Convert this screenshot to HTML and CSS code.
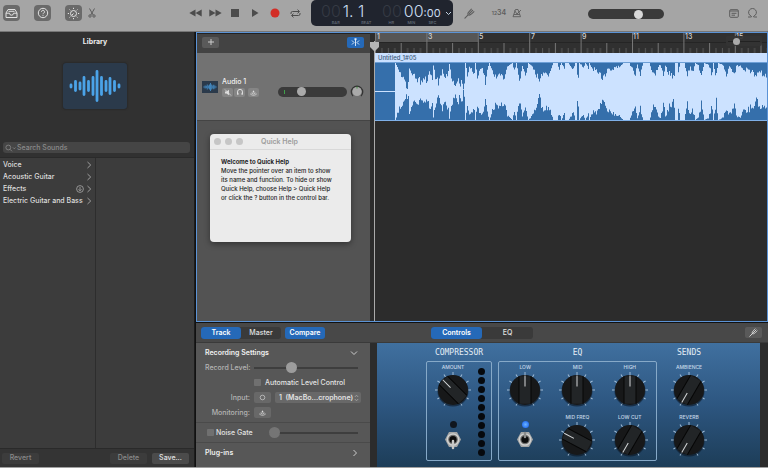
FILE: index.html
```
<!DOCTYPE html>
<html lang="en">

<head>
    <meta charset="utf-8">
    <title>Untitled - Tracks</title>
    <link rel="stylesheet" href="styles.css">
</head>

<body>

    <!-- shared shapes -->
    <svg class="defs" aria-hidden="true">
        <symbol id="ticks" viewBox="0 0 38 38">
            <g stroke="#9fbbd6" stroke-width="1">
                <path d="M19 1v3" />
                <path d="M19 1v3" transform="rotate(30 19 19)" />
                <path d="M19 1v3" transform="rotate(60 19 19)" />
                <path d="M19 1v3" transform="rotate(90 19 19)" />
                <path d="M19 1v3" transform="rotate(120 19 19)" />
                <path d="M19 1v3" transform="rotate(150 19 19)" />
                <path d="M19 1v3" transform="rotate(210 19 19)" />
                <path d="M19 1v3" transform="rotate(240 19 19)" />
                <path d="M19 1v3" transform="rotate(270 19 19)" />
                <path d="M19 1v3" transform="rotate(300 19 19)" />
                <path d="M19 1v3" transform="rotate(330 19 19)" />
            </g>
            <circle cx="19" cy="20" r="15.5" fill="#0b1622" opacity=".6" />
            <circle cx="19" cy="19" r="15" fill="#171819" />
        </symbol>
        <symbol id="cap" viewBox="0 0 38 38">
            <path d="M13 5.3L25 5.3L25 32.7L13 32.7z" fill="#222527" />
            <path d="M13 5.3v27.4M25 5.3v27.4" stroke="#060606" stroke-width="1" />
            <path d="M19 4.500v11" stroke="#d5d8da" stroke-width="1" />
        </symbol>
        <symbol id="switch" viewBox="0 0 18 20">
            <path d="M5 2h8l4 7.500-4 7.500H5L1 9.500z" fill="#a4a6a6" />
            <circle cx="9" cy="9.500" r="6.300" fill="#d2d2d0" />
            <circle cx="9" cy="9.500" r="4.800" fill="#6e6e6c" />
            <circle cx="9" cy="9.500" r="3.600" fill="#0c0c0c" />
        </symbol>
        <symbol id="fork" viewBox="0 0 12 12">
            <path d="M1 11L4.500 7.500M4.500 7.500C3.600 5.800 4.400 5 8 1.200M4.500 7.500C6.200 8.400 7 7.600 10.800 4M5.800 6.200L9.400 2.600" fill="none" stroke="currentColor" stroke-width="1.200" stroke-linecap="round" />
        </symbol>
        <symbol id="chevron" viewBox="0 0 6 8">
            <path d="M1.500 1L4.700 4L1.500 7" fill="none" stroke="currentColor" stroke-width=".9" />
        </symbol>
        <symbol id="monitor" viewBox="0 0 10 8">
            <path d="M5 1.500L6.500 4h-3z" fill="currentColor" />
            <path d="M2.500 4.500Q5 7 7.500 4.500M1.200 5.500Q5 9 8.800 5.500" fill="none" stroke="currentColor" stroke-width=".8" />
        </symbol>
        <symbol id="bars" viewBox="0 0 64 46">
            <path d="M8 22v2M12.500 18.500v9M17 20v6M21 14.500v17M25.500 18.500v9M30 14.500v17M34 8.500v29M38.500 14.500v17M43 18.500v9M47 15.500v15M51.500 18.500v9M56 22v2" stroke="#4ba3e8" stroke-width="2.800" stroke-linecap="round" />
        </symbol>
    </svg>

    <header class="toolbar">
        <div class="toolbar-left">
            <button class="tile" aria-label="Library">
                <svg width="13" height="11" viewBox="0 0 13 11" fill="none" stroke="#e2e2e2" stroke-width="1"><path d="M1 5L3 1.500h7L12 5v4.500H1zM1 5.200h3.500a2 2 0 0 0 4 0H12M3.500 3.300h6" /></svg>
            </button>
            <button class="tile" aria-label="Quick Help">
                <svg width="12" height="12" viewBox="0 0 12 12" fill="none" stroke="#e2e2e2" stroke-width="1"><circle cx="6" cy="6" r="4.700" /><path d="M4.500 4.800a1.500 1.500 0 1 1 2.200 1.300Q6 6.400 6 7.200M6 8.200v.9" /></svg>
            </button>
            <button class="tile" aria-label="Smart Controls">
                <svg width="13" height="13" viewBox="0 0 13 13" fill="none" stroke="#e2e2e2" stroke-width="1"><circle cx="6.500" cy="6.500" r="3" /><path d="M6.500 6.500L5 8" /><path d="M6.500 .8v1.200M6.500 11v1.200M.8 6.500H2M11 6.500h1.200M2.500 2.500l.8.8M9.700 9.700l.8.8M2.500 10.500l.8-.8M9.700 3.300l.8-.8" /></svg>
            </button>
            <button class="plain" aria-label="Editors">
                <svg width="8" height="10" viewBox="0 0 8 10" fill="none" stroke="#5c5c5c" stroke-width="1"><path d="M1.500 .5L5.200 7M6.500 .5L2.800 7" /><circle cx="2" cy="8" r="1.200" /><circle cx="6" cy="8" r="1.200" /></svg>
            </button>
        </div>
        <div class="transport">
            <button class="plain" aria-label="Rewind"><svg width="13" height="8" viewBox="0 0 13 8"><path d="M6.500 .5v7L.3 4zM12.700 .5v7L6.500 4z" fill="#4c4c4c" /></svg></button>
            <button class="plain" aria-label="Forward"><svg width="13" height="8" viewBox="0 0 13 8"><path d="M.3 .5v7L6.500 4zM6.500 .5v7L12.700 4z" fill="#4c4c4c" /></svg></button>
            <button class="plain" aria-label="Stop"><svg width="8" height="8"><rect width="8" height="8" fill="#4c4c4c" /></svg></button>
            <button class="plain" aria-label="Play"><svg width="8" height="8" viewBox="0 0 8 8"><path d="M1 0v8l6.500-4z" fill="#4c4c4c" /></svg></button>
            <button class="plain" aria-label="Record"><svg width="10" height="10"><circle cx="5" cy="5" r="4.500" fill="#d22d26" /></svg></button>
            <button class="plain" aria-label="Cycle"><svg width="11" height="9" viewBox="0 0 11 9" fill="none" stroke="#4c4c4c" stroke-width="1"><path d="M1 5V4q0-1.500 1.500-1.500H9M7.500 .6L9.500 2.500L7.500 4.400M10 4v1q0 1.500-1.500 1.500H2M3.500 4.600L1.500 6.500L3.500 8.400" /></svg></button>
        </div>
        <div class="lcd">
            <div class="lcd-part">
                <div class="digits"><span class="off">00</span>1. 1</div>
                <div class="units"><span>BAR</span><span>BEAT</span></div>
            </div>
            <div class="lcd-part">
                <div class="digits"><span class="off">00</span>00<span class="sec">:00</span></div>
                <div class="units"><span>HR</span><span>MIN</span><span>SEC</span></div>
            </div>
            <button class="lcd-menu" aria-label="Display mode"><svg width="7" height="5" viewBox="0 0 7 5"><path d="M1 1l2.500 2.500L6 1" fill="none" stroke="#c3d3e2" /></svg></button>
        </div>
        <div class="tools">
            <button class="plain" aria-label="Tuner"><svg width="11" height="11"><use href="#fork" /></svg></button>
            <button class="plain count"><small>12</small>34</button>
            <button class="plain" aria-label="Metronome"><svg width="10" height="10" viewBox="0 0 10 10" fill="none" stroke="#5c5c5c" stroke-width=".9"><path d="M3.500 1.500h2.500l2.500 7.200H1zM2 6.500h5.700M5 6L2.500 2.500M5 6l4-4" /></svg></button>
        </div>
        <input class="pill master" type="range" min="0" max="100" value="70" aria-label="Master Volume">
        <div class="tools">
            <button class="plain" aria-label="Note Pad"><svg width="10" height="9" viewBox="0 0 10 9" fill="none" stroke="#5c5c5c"><rect x=".7" y=".7" width="8.600" height="7.600" rx="1" /><path d="M1 2h8M2.500 4.300h5M2.500 6.200h3.500" /></svg></button>
            <button class="plain" aria-label="Loop Browser"><svg width="11" height="10" viewBox="0 0 11 10" fill="none" stroke="#5c5c5c"><path d="M1 9h2.500Q5.500 9 4 8a3.900 3.900 0 1 1 3 0Q5.500 9 7.500 9H10" /></svg></button>
        </div>
    </header>

    <div class="main">

        <aside class="library">
            <div class="library-top">
                <h2>Library</h2>
                <div class="patch"><svg width="64" height="46"><use href="#bars" /></svg></div>
                <div class="search">
                    <svg width="12" height="8" viewBox="0 0 12 8" fill="none" stroke="#8a8a8a" stroke-width=".8"><circle cx="3.300" cy="3.500" r="2.400" /><path d="M5 5.300L7 7.300M8 3.500l1.300 1.300L10.600 3.500" /></svg>
                    <input type="search" placeholder="Search Sounds" aria-label="Search Sounds">
                </div>
            </div>
            <div class="browser">
                <ul>
                    <li><a href="#">Voice <svg width="6" height="8"><use href="#chevron" /></svg></a></li>
                    <li><a href="#">Acoustic Guitar <svg width="6" height="8"><use href="#chevron" /></svg></a></li>
                    <li><a href="#">Effects
                        <svg class="get" width="8" height="8" viewBox="0 0 8 8" fill="none" stroke="#aaa" stroke-width=".8"><circle cx="4" cy="4" r="3.400" /><path d="M4 2v3.700M2.500 4.300L4 5.800L5.500 4.300" /></svg>
                        <svg width="6" height="8"><use href="#chevron" /></svg></a></li>
                    <li><a href="#">Electric Guitar and Bass <svg width="6" height="8"><use href="#chevron" /></svg></a></li>
                </ul>
            </div>
            <div class="library-foot">
                <button class="btn" disabled>Revert</button>
                <button class="btn push" disabled>Delete</button>
                <button class="btn">Save...</button>
            </div>
        </aside>

        <div class="workspace">

            <section class="tracks">
                <div class="track-list">
                    <div class="track-bar">
                        <button class="btn-icon" aria-label="Add Track"><svg width="8" height="8"><path d="M4 1v6M1 4h6" stroke="#ccc" /></svg></button>
                        <button class="btn-icon on" aria-label="Catch Playhead"><svg width="9" height="8" viewBox="0 0 9 8" fill="none" stroke="#e6f0fa" stroke-width=".9"><path d="M4.500 1.500V8M1 2.500L3 4.500L1 6.500M8 2.500L6 4.500L8 6.500" /><path d="M3.500 .3h2v1.500l-1 1-1-1z" fill="#e6f0fa" stroke="none" /></svg></button>
                    </div>
                    <div class="track">
                        <div class="track-icon"><svg width="16" height="12"><use href="#bars" /></svg></div>
                        <div class="track-main">
                            <div class="track-info">
                                <div class="track-name">Audio 1</div>
                                <div class="track-buttons">
                                    <button aria-label="Mute"><svg width="8" height="7" viewBox="0 0 8 7"><path d="M1 2.500h1.500L5 .8v5.400L2.500 4.500H1z" fill="#ddd" /><path d="M1 .5l6 6" stroke="#ddd" stroke-width=".8" /></svg></button>
                                    <button aria-label="Solo"><svg width="8" height="8" viewBox="0 0 8 8" fill="none" stroke="#ddd"><path d="M1.500 6.500V4a2.500 2.700 0 0 1 5 0v2.500M2 4.800v2M6 4.800v2" /></svg></button>
                                    <button class="alone" aria-label="Input Monitoring"><svg width="9" height="7" color="#ddd"><use href="#monitor" /></svg></button>
                                </div>
                            </div>
                            <input class="pill volume" type="range" min="0" max="100" value="31" aria-label="Volume">
                            <svg class="pan" width="14" height="12" viewBox="0 0 14 12"><path d="M3 11A5.700 5.700 0 1 1 11 11" fill="none" stroke="#333" stroke-width="1.300" /><circle cx="7" cy="6.500" r="4.600" fill="#a9a9a9" /><path d="M7 1.500v2" stroke="#3f8f3f" /></svg>
                        </div>
                    </div>
                </div>

                <div class="timeline">
                    <svg class="ruler" width="100%" height="20">
                        <defs>
                            <pattern id="beats" width="51.400" height="20" patternUnits="userSpaceOnUse">
                                <path d="M.5 0v20" stroke="#777" />
                                <path d="M26.200 10v10" stroke="#777" />
                                <path d="M6.900 15v5M13.400 15v5M19.800 15v5M32.600 15v5M39 15v5M45.500 15v5" stroke="#585858" />
                            </pattern>
                        </defs>
                        <rect width="103" height="9" fill="#565656" />
                        <path d="M0 9.500H2000" stroke="#252525" />
                        <rect width="100%" height="20" fill="url(#beats)" />
                        <text x="2" y="6">1</text>
                        <text x="53" y="6">3</text>
                        <text x="104" y="6">5</text>
                        <text x="156" y="6">7</text>
                        <text x="207" y="6">9</text>
                        <text x="258" y="6">11</text>
                        <text x="310" y="6">13</text>
                        <text x="361" y="6">15</text>
                    </svg>
                    <input class="zoom" type="range" min="0" max="100" value="24" aria-label="Horizontal Zoom">
                    <div class="region">
                        <div class="region-name">Untitled_1#05</div>
                        <svg class="wave" viewBox="0 0 392 57" preserveAspectRatio="none"><path id="wave" fill="#cce2ff" /></svg>
                    </div>
                    <div class="playhead"><svg width="11" height="11" viewBox="0 0 11 11"><path d="M1 1h9v5l-4.500 4.500L1 6z" fill="#b5b5b5" /></svg></div>
                </div>

                <div class="quick-help">
                    <div class="quick-title"><i></i><i></i><i></i><span>Quick Help</span></div>
                    <div class="quick-body">
                        <b>Welcome to Quick Help</b><br>
                        Move the pointer over an item to show<br>
                        its name and function. To hide or show<br>
                        Quick Help, choose Help &gt; Quick Help<br>
                        or click the ? button in the control bar.
                    </div>
                </div>
            </section>

            <section class="smart">
                <div class="smart-bar">
                    <div class="smart-left">
                        <div class="segment"><button class="on">Track</button><button>Master</button></div>
                        <button class="compare">Compare</button>
                    </div>
                    <div class="smart-right">
                        <div class="segment wide"><button class="on">Controls</button><button>EQ</button></div>
                        <button class="btn-icon tuner" aria-label="Tuner"><svg width="9" height="9"><use href="#fork" /></svg></button>
                    </div>
                </div>

                <div class="smart-body">
                    <form class="inspector">
                        <div class="section">
                            <div class="section-title">Recording Settings <svg width="8" height="6" viewBox="0 0 8 6"><path d="M1 1.500l3 3 3-3" fill="none" stroke="#ccc" /></svg></div>
                            <div class="row">
                                <label for="level">Record Level:</label>
                                <input class="line" type="range" id="level" min="0" max="100" value="34">
                            </div>
                            <div class="row">
                                <span></span>
                                <div class="field"><input type="checkbox" id="auto"><label for="auto">Automatic Level Control</label></div>
                            </div>
                            <div class="row">
                                <label for="input">Input:</label>
                                <div class="field">
                                    <button type="button" class="mini" aria-label="Input format"><svg width="7" height="7"><circle cx="3.500" cy="3.500" r="2.300" fill="none" stroke="#bbb" stroke-width=".9" /></svg></button>
                                    <div class="select">
                                        <select id="input"><option>1&nbsp; (MacBo...crophone)</option></select>
                                        <svg width="5" height="8" viewBox="0 0 5 8"><path d="M.8 3L2.500 1.200L4.200 3M.8 5L2.500 6.800L4.200 5" fill="none" stroke="#aaa" stroke-width=".8" /></svg>
                                    </div>
                                </div>
                            </div>
                            <div class="row">
                                <label for="monitoring">Monitoring:</label>
                                <button type="button" class="mini" id="monitoring"><svg width="9" height="7" color="#ddd"><use href="#monitor" /></svg></button>
                            </div>
                        </div>
                        <div class="section gate">
                            <input type="checkbox" id="gate"><label for="gate">Noise Gate</label>
                            <input class="line dim" type="range" min="0" max="100" value="0" aria-label="Noise Gate Level">
                        </div>
                        <div class="section">
                            <div class="section-title">Plug-ins <svg width="6" height="8" viewBox="0 0 6 8"><path d="M1.500 1l3 3-3 3" fill="none" stroke="#ccc" /></svg></div>
                        </div>
                    </form>

                    <div class="panel">
                        <div class="group compressor">
                            <h3>COMPRESSOR</h3>
                            <div class="box">
                                <div class="column">
                                    <div class="knob"><span>AMOUNT</span><svg width="38" height="38"><use href="#ticks" /><use href="#cap" transform="rotate(-45 19 19)" /></svg></div>
                                    <div class="toggle"><i class="led"></i><svg width="18" height="20"><use href="#switch" /><path d="M9 11v7" stroke="#c8c8c6" stroke-width="2.500" stroke-linecap="round" /></svg></div>
                                </div>
                                <div class="meter"><i></i><i></i><i></i><i></i><i></i><i></i><i></i><i></i><i></i><i></i></div>
                            </div>
                        </div>
                        <div class="group eq">
                            <h3>EQ</h3>
                            <div class="box">
                                <div class="knob"><span>LOW</span><svg width="38" height="38"><use href="#ticks" /><use href="#cap" /></svg></div>
                                <div class="knob"><span>MID</span><svg width="38" height="38"><use href="#ticks" /><use href="#cap" /></svg></div>
                                <div class="knob"><span>HIGH</span><svg width="38" height="38"><use href="#ticks" /><use href="#cap" /></svg></div>
                                <div class="toggle"><i class="led lit"></i><svg width="18" height="20"><use href="#switch" /><path d="M9 7V3" stroke="#8c8c8a" stroke-width="2.500" stroke-linecap="round" /></svg></div>
                                <div class="knob"><span>MID FREQ</span><svg width="38" height="38"><use href="#ticks" /><use href="#cap" transform="rotate(-62 19 19)" /></svg></div>
                                <div class="knob"><span>LOW CUT</span><svg width="38" height="38"><use href="#ticks" /><use href="#cap" transform="rotate(-150 19 19)" /></svg></div>
                            </div>
                        </div>
                        <div class="group sends">
                            <h3>SENDS</h3>
                            <div class="box">
                                <div class="knob"><span>AMBIENCE</span><svg width="38" height="38"><use href="#ticks" /><use href="#cap" transform="rotate(-150 19 19)" /></svg></div>
                                <div class="knob"><span>REVERB</span><svg width="38" height="38"><use href="#ticks" /><use href="#cap" transform="rotate(-150 19 19)" /></svg></div>
                            </div>
                        </div>
                    </div>
                </div>
            </section>

        </div>
    </div>

    <script src="wave.js"></script>
</body>

</html>
```
FILE: styles.css
```
* {
    box-sizing: border-box;
}

body {
    margin: 0;
    min-height: 100vh;
    display: flex;
    flex-direction: column;
    background: #2c2c2c;
    border-bottom: 1px solid #a0a0a0;
    color: #e2e2e2;
    font: 500 7px/10px Inter, "Liberation Sans", sans-serif;
}

button, input, select {
    margin: 0;
    padding: 0;
    border: 0;
    background: none;
    color: inherit;
    font: inherit;
}

button {
    display: flex;
    align-items: center;
    justify-content: center;
}

svg {
    display: block;
}

h2, h3, ul {
    margin: 0;
    padding: 0;
}

.defs {
    position: absolute;
    width: 0;
    height: 0;
}

/* toolbar */
.toolbar {
    display: flex;
    align-items: flex-start;
    height: 32px;
    padding-right: 7px;
    background: #a5a5a5;
    border-bottom: 1px solid #777;
}

.toolbar-left {
    display: flex;
    align-items: center;
    gap: 14px;
    width: 185px;
    height: 26px;
    padding-left: 3px;
}

.tile {
    width: 17px;
    height: 16px;
    border-radius: 4px;
    background: #6a6a6a;
}

.plain {
    height: 26px;
    color: #5c5c5c;
}

.toolbar-left .plain {
    margin-left: -8px;
}

.transport {
    display: flex;
}

.transport .plain {
    width: 20px;
}

.tools {
    display: flex;
}

.tools .plain {
    width: 18px;
}

.count {
    margin-left: 12px;
    font-weight: 600;
}

.count small {
    font-size: 5px;
}

.lcd {
    display: flex;
    width: 142px;
    height: 26px;
    margin: 0 7px 0 6px;
    padding-left: 10px;
    border-radius: 5px;
    background: #20242e;
    color: #c9dcee;
}

.lcd-part {
    flex: 1;
    padding-top: 3px;
}

.digits {
    height: 17px;
    font: 300 16px/17px Inter, sans-serif;
    white-space: nowrap;
}

.off {
    margin-right: 2px;
    color: #353a44;
}

.sec {
    font-size: 11px;
    font-weight: 400;
}

.units {
    display: flex;
    justify-content: space-around;
    color: #66707c;
    font-size: 4px;
    line-height: 5px;
}

.lcd-menu {
    width: 10px;
}

/* sliders */
input[type="range"] {
    -webkit-appearance: none;
    appearance: none;
    min-width: 0;
}

input[type="range"]::-webkit-slider-thumb {
    -webkit-appearance: none;
    width: 9px;
    height: 9px;
    border-radius: 50%;
    background: #aaa;
}

.pill {
    height: 10px;
    border-radius: 5px;
    background: #3a3a3a;
}

.master {
    width: 76px;
    margin: 9px auto 0;
}

input.master::-webkit-slider-thumb {
    background: #d8d8d8;
}

.line {
    height: 11px;
    background: linear-gradient(#3e3e3e, #3e3e3e) center / 100% 2px no-repeat;
}

input.line::-webkit-slider-thumb {
    width: 11px;
    height: 11px;
    background: #9c9c9c;
}

input.dim::-webkit-slider-thumb {
    background: #757575;
}

/* library */
.main {
    flex: 1;
    display: flex;
}

.library {
    width: 195px;
    display: flex;
    flex-direction: column;
    background: #3c3c3c;
    border-right: 1px solid #1c1c1c;
}

.library-top {
    height: 126px;
    padding: 5px 4px 0 3px;
    background: #313131;
    border-bottom: 1px solid #2a2a2a;
}

.library h2 {
    padding-right: 3px;
    color: #eee;
    font-size: 7px;
    text-align: center;
}

.patch {
    width: 64px;
    height: 46px;
    margin: 16px auto 33px 60px;
    border-radius: 3px;
    background: #2b3a4b;
    box-shadow: 0 0 2px #1c1c1c;
}

.search {
    display: flex;
    align-items: center;
    height: 11px;
    padding-left: 2px;
    border-radius: 3px;
    background: #454545;
}

.search input {
    flex: 1;
    height: 11px;
    outline: 0;
}

.search input::placeholder {
    color: #8a8a8a;
}

.browser {
    flex: 1;
}

.browser ul {
    width: 96px;
    height: 100%;
    padding-top: 1px;
    border-right: 1px solid #2d2d2d;
    list-style: none;
}

.browser a {
    display: flex;
    align-items: center;
    height: 12px;
    padding: 0 3px;
    color: #dedede;
    text-decoration: none;
    white-space: nowrap;
}

.browser a svg {
    margin-left: auto;
    color: #aaa;
}

.browser a .get + svg {
    margin-left: 2px;
}

.library-foot {
    display: flex;
    align-items: center;
    gap: 5px;
    height: 19px;
    padding: 0 5px 0 2px;
    background: #343434;
    border-top: 1px solid #2a2a2a;
}

.btn {
    width: 37px;
    height: 11px;
    border-radius: 2px;
    background: #4b4b4b;
}

.btn:disabled {
    background: #3c3c3c;
    color: #8a8a8a;
}

.push {
    margin-left: auto;
}

/* tracks */
.workspace {
    flex: 1;
    display: flex;
    flex-direction: column;
    min-width: 0;
    padding-left: 1px;
    background: #111;
}

.tracks {
    position: relative;
    flex: 1;
    display: flex;
    border: 1px solid #5b93d6;
    background: #2c2c2c;
}

.track-list {
    width: 173px;
    background: #535353;
}

.track-bar {
    display: flex;
    align-items: center;
    justify-content: space-between;
    height: 20px;
    padding: 0 6px 3px 5px;
    background: #434343;
    border-top: 1px solid #222;
}

.btn-icon {
    width: 17px;
    height: 11px;
    border-radius: 2px;
    background: #5a5a5a;
}

.on, .compare {
    background: #2569b8;
}

.track {
    display: flex;
    align-items: center;
    gap: 4px;
    height: 68px;
    padding-left: 5px;
    background: #727272;
    border-bottom: 1px solid #444;
}

.track-icon {
    background: #2b3a4b;
}

.track-main {
    display: flex;
    align-items: flex-end;
    height: 20px;
}

.track-name {
    color: #f0f0f0;
}

.track-info {
    width: 56px;
}

.track-buttons {
    display: flex;
    gap: 1px;
    margin-top: 1px;
}

.track-buttons button {
    width: 11px;
    height: 9px;
    border-radius: 2px;
    background: #858585;
}

.track-buttons .alone {
    margin-left: 2px;
}

.volume {
    width: 69px;
    margin-right: 3px;
    background: linear-gradient(#3fa04a, #3fa04a) 6px 3px / 1px 4px no-repeat #3a3a3a;
}

/* timeline */
.timeline {
    position: relative;
    flex: 1;
    margin-left: 5px;
}

.ruler {
    background: #303030;
}

.ruler text {
    fill: #d4d4d4;
    font-size: 7px;
}

.zoom {
    position: absolute;
    top: 3px;
    right: 5px;
    width: 36px;
    height: 10px;
    border-radius: 2px;
    background: linear-gradient(#222, #222) center / 32px 1px no-repeat rgba(52, 52, 52, .92);
}

input.zoom::-webkit-slider-thumb {
    width: 7px;
    height: 7px;
}

.region {
    border-bottom: 1px solid #7fb0e8;
    background: #356fab;
}

.region-name {
    height: 10px;
    padding-left: 3px;
    background: #cae0ff;
    color: #3a5878;
    font-size: 6px;
    border-bottom: 1px solid #6d9fd6;
}

.wave {
    width: 100%;
    height: 57px;
}

.playhead {
    position: absolute;
    top: 8px;
    bottom: 0;
    left: -6px;
    width: 11px;
    background: linear-gradient(#aaa, #aaa) center / 1px 100% no-repeat;
}

/* floating help window */
.quick-help {
    position: absolute;
    top: 101px;
    left: 13px;
    width: 141px;
    height: 108px;
    border-radius: 4px;
    background: #ebebeb;
    box-shadow: 0 2px 6px rgba(0, 0, 0, .4);
    color: #1e1e1e;
}

.quick-title {
    display: flex;
    align-items: center;
    gap: 4px;
    height: 16px;
    padding-left: 4px;
    border-bottom: 1px solid #d8d8d8;
    color: #9c9c9c;
    font-weight: 600;
}

.quick-title i {
    width: 7px;
    height: 7px;
    border-radius: 50%;
    background: #c6c6c6;
}

.quick-title span {
    margin-left: 14px;
}

.quick-body {
    padding: 7px 11px;
    font-size: 6px;
    line-height: 9px;
    white-space: nowrap;
}

/* smart controls */
.smart {
    padding-top: 1px;
}

.smart-bar, .smart-body {
    display: flex;
}

.smart-bar {
    height: 20px;
    background: #484848;
    border-bottom: 1px solid #3a3a3a;
}

.smart-left {
    display: flex;
    align-items: center;
    gap: 4px;
    width: 181px;
    padding-left: 5px;
}

.smart-right {
    flex: 1;
    display: flex;
    align-items: center;
    justify-content: space-between;
    padding: 0 6px 0 54px;
}

.segment {
    display: flex;
    border-radius: 3px;
    background: #3a3a3a;
}

.segment button, .compare {
    width: 40px;
    height: 12px;
    border-radius: 3px;
}

.compare, .segment .on {
    color: #fff;
    font-weight: 600;
}

.segment.wide button {
    width: 51px;
}

.inspector {
    width: 174px;
    background: #575757;
}

.section {
    padding: 3px 12px 2px 9px;
    border-bottom: 1px solid #4a4a4a;
}

.section:last-child {
    padding: 3px 12px 6px 9px;
    border: 0;
}

.section-title {
    display: flex;
    align-items: center;
    justify-content: space-between;
    height: 14px;
    color: #f0f0f0;
    font-weight: 600;
}

.row {
    display: grid;
    grid-template-columns: 45px 1fr;
    align-items: center;
    gap: 4px;
    height: 15px;
}

.row > label {
    color: #b4b4b4;
    text-align: right;
    white-space: nowrap;
}

.field {
    display: flex;
    align-items: center;
    gap: 4px;
    white-space: nowrap;
}

input[type="checkbox"] {
    -webkit-appearance: none;
    appearance: none;
    width: 7px;
    height: 7px;
    border-radius: 1px;
    background: #707070;
}

.mini {
    width: 17px;
    height: 11px;
    border-radius: 2px;
    background: #686868;
}

.select {
    display: flex;
    align-items: center;
    flex: 1;
    min-width: 0;
    height: 11px;
    padding: 0 2px 0 4px;
    border-radius: 2px;
    background: #686868;
}

.select select {
    -webkit-appearance: none;
    appearance: none;
    flex: 1;
    min-width: 0;
    font-weight: 600;
}

.gate {
    display: flex;
    align-items: center;
    gap: 2px;
    height: 20px;
    padding: 0 12px 0 11px;
}

.gate .line {
    flex: 1;
    margin-left: 14px;
}

/* plug-in panel */
.panel {
    flex: 1;
    display: flex;
    justify-content: center;
    gap: 6px;
    margin: 0 8px 0 7px;
    padding: 4px 0 6px 4px;
    background: linear-gradient(#40709f, #2d5680 50%, #1d3d58);
}

.smart-body {
    background: #2c2c2c;
}

.panel h3 {
    height: 14px;
    color: #e4edf5;
    font: 8px/11px "DejaVu Sans Mono", monospace;
    text-align: center;
}

.box {
    display: grid;
    gap: 3px 0;
    height: 100px;
    padding-top: 1px;
    border: 1px solid #86a9c8;
    border-radius: 2px;
}

.compressor .box {
    grid-template-columns: 46px 10px;
    width: 66px;
    padding-left: 3px;
}

.eq .box {
    grid-template-columns: 1fr 1fr 1fr;
    width: 159px;
}

.sends .box {
    width: 52px;
    border-color: transparent;
}

.column {
    display: grid;
    gap: 3px;
}

.knob {
    display: flex;
    flex-direction: column;
    align-items: center;
    height: 46px;
    color: #c6d8e8;
    font-size: 5px;
    line-height: 8px;
    white-space: nowrap;
}

.toggle {
    display: flex;
    flex-direction: column;
    align-items: center;
    gap: 2px;
    height: 46px;
    padding-top: 8px;
}

.led {
    width: 7px;
    height: 7px;
    border-radius: 50%;
    background: #10161e;
}

.led.lit {
    background: radial-gradient(#6ab4ff, #0f58f0);
}

.meter {
    display: flex;
    flex-direction: column;
    align-items: center;
    gap: 2px;
    padding-top: 5px;
}

.meter i {
    width: 7px;
    height: 7px;
    border-radius: 50%;
    background: #06090d;
}
```
FILE: wave.js
```
// gap between the waveform and the region edge, as x, gap pairs
var gaps = [
    20, 0, 22, 5, 24, 10, 27, 14, 32, 22, 33, 22, 34, 5, 37, 13, 41, 15, 45, 19, 48, 15, 52, 18, 54, 11, 57, 16,
    58, 2, 60, 14, 63, 19, 67, 8, 70, 17, 73, 9, 74, 1, 76, 16, 80, 21, 82, 16, 87, 21, 89, 21, 90, 0, 92, 11,
    94, 4, 97, 8, 99, 10, 100, 0, 102, 13, 104, 7, 107, 5, 110, 18, 112, 6, 114, 0, 117, 8, 120, 14, 125, 12,
    128, 16, 132, 4, 137, 0, 139, 8, 141, 0, 144, 18, 147, 3, 150, 12, 153, 0, 157, 4, 160, 10, 164, 18, 168, 8,
    173, 12, 178, 0, 182, 0, 184, 8, 186, 0, 189, 7, 190, 0, 193, 0, 198, 9, 200, 0, 201, 0, 202, 21, 203, 20,
    204, 0, 208, 6, 210, 0, 213, 7, 214, 0, 217, 8, 221, 9, 225, 15, 227, 19, 231, 12, 236, 9, 240, 6, 245, 4,
    248, 0, 254, 0, 256, 7, 260, 14, 262, 2, 265, 14, 268, 0, 274, 0, 278, 14, 280, 17, 283, 5, 285, 3, 288, 17,
    290, 5, 293, 12, 298, 21, 299, 20, 300, 0, 302, 0, 303, 14, 305, 0, 309, 0, 312, 17, 315, 5, 317, 14, 320, 0,
    323, 4, 326, 17, 329, 0, 333, 2, 337, 17, 338, 0, 341, 19, 343, 0, 348, 3, 351, 15, 354, 6, 359, 17, 361, 4,
    365, 3, 368, 11, 371, 8, 375, 14, 378, 12, 381, 19, 386, 12, 390, 17, 392, 14
];

function gapAt(x) {
    var i = 0;
    while (i < gaps.length - 4 && gaps[i + 2] < x) {
        i += 2;
    }
    var t = (x - gaps[i]) / (gaps[i + 2] - gaps[i]);
    return gaps[i + 1] + (gaps[i + 3] - gaps[i + 1]) * t;
}

// repeatable noise, so every load draws the same columns
function noise(x, seed) {
    var n = Math.sin(x * 12.9898 + seed) * 43758.5453;
    return n - Math.floor(n);
}

function drawWave() {
    var d = "M0 28H20V29H0z";
    for (var x = 20; x < 392; x++) {
        var gap = gapAt(x);
        // the second half of the take is denser
        var low = x < 178 ? 0.75 : 0.5;
        var up = gap * (low + noise(x, 1) * 0.5);
        var down = gap * (low + 0.1 + noise(x, 5) * 0.6);
        d += "M" + x + " " + up.toFixed(1) + "h1V" + (57 - down).toFixed(1) + "h-1z";
    }
    document.getElementById("wave").setAttribute("d", d);
}

drawWave();
```
